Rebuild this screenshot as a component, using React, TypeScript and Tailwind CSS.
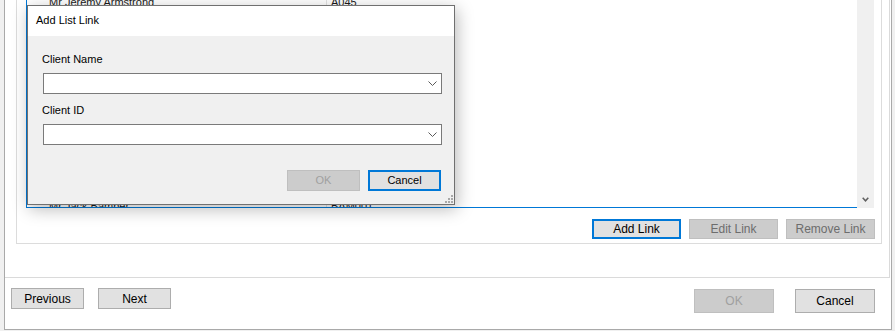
import React from "react";

const rows: [string, string][] = [
  ["Mr Jeremy Armstrong", "A045"],
  ["", ""],
  ["", ""],
  ["", ""],
  ["", ""],
  ["", ""],
  ["", ""],
  ["", ""],
  ["", ""],
  ["", ""],
  ["", ""],
  ["", ""],
  ["Mr Jack Bamber", "BAM001"],
];

function Chevron() {
  return (
    <svg width="9" height="5" viewBox="0 0 9 5" className="block">
      <polyline points="0.5,0.5 4.5,4.5 8.5,0.5" fill="none" stroke="#5a5a5a" strokeWidth="1" />
    </svg>
  );
}

function Combo() {
  return (
    <div className="h-[21px] w-full border border-[#7a7a7a] bg-white flex items-center justify-end pr-[4px]">
      <Chevron />
    </div>
  );
}

export default function App() {
  return (
    <div className="relative w-[895px] h-[331px] overflow-hidden bg-[#f0f0f0] font-['Liberation_Sans',Arial,sans-serif] text-black">
      <div className="ml-[4px] w-[888px] h-[330px] border-l border-r border-b border-[#a9a9a9] bg-white flex flex-col">
        {/* upper panel */}
        <div className="h-[278px] shrink-0 mr-[1px] border-b border-r border-[#dadada] pl-[11px]">
          <div className="w-[866px] h-[244px] border-l border-r border-b border-[#dcdcdc] pl-[9px] pr-[6px] flex flex-col">
            {/* list view */}
            <div className="w-[848px] h-[208px] shrink-0 flex">
              <div className="w-[831px] h-full border-l border-b border-[#0078d7] overflow-hidden">
                <div className="-mt-[6px] flex flex-col">
                  {rows.map(([name, code], i) => (
                    <div key={i} className="h-[17px] flex text-[11px] leading-[17px] text-[#1a1a1a] whitespace-nowrap">
                      <div className="w-[300px] shrink-0 border-r border-[#e3e3e3] pl-[22px]">{name}</div>
                      <div className="pl-[4px]">{code}</div>
                    </div>
                  ))}
                </div>
              </div>
              <div className="w-[17px] h-full bg-[#f0f0f0] flex flex-col justify-end items-center pb-[6px]">
                <svg width="7" height="5" viewBox="0 0 7 5" className="block">
                  <polyline points="0.7,0.7 3.5,3.8 6.3,0.7" fill="none" stroke="#606060" strokeWidth="1.5" />
                </svg>
              </div>
            </div>
            {/* buttons */}
            <div className="mt-[11px] flex justify-end gap-[8px] text-[12px]">
              <div className="w-[89px] h-[20px] border-2 border-[#0078d7] bg-[#e1e1e1] flex items-center justify-center">Add Link</div>
              <div className="w-[89px] h-[20px] border border-[#bfbfbf] bg-[#cccccc] text-[#6d6d6d] flex items-center justify-center">Edit Link</div>
              <div className="w-[89px] h-[20px] border border-[#bfbfbf] bg-[#cccccc] text-[#6d6d6d] flex items-center justify-center">Remove Link</div>
            </div>
          </div>
        </div>
        {/* bottom bar */}
        <div className="flex-1 flex justify-between items-start pt-[10px] pl-[6px] pr-[16px] text-[12px]">
          <div className="flex gap-[14px]">
            <div className="w-[73px] h-[21px] border border-[#adadad] bg-[#e1e1e1] flex items-center justify-center">Previous</div>
            <div className="w-[73px] h-[21px] border border-[#adadad] bg-[#e1e1e1] flex items-center justify-center">Next</div>
          </div>
          <div className="mt-[1px] flex gap-[21px]">
            <div className="w-[80px] h-[24px] border border-[#bfbfbf] bg-[#cccccc] text-[#a0a0a0] flex items-center justify-center">OK</div>
            <div className="w-[80px] h-[24px] border border-[#adadad] bg-[#e1e1e1] flex items-center justify-center">Cancel</div>
          </div>
        </div>
      </div>

      {/* dialog */}
      <div className="absolute left-[27px] top-[5px] w-[428px] h-[200px] border border-[#707070] flex flex-col shadow-[2px_4px_16px_rgba(0,0,0,0.28)]">
        <div className="h-[30px] shrink-0 bg-white flex items-center pl-[8px] pb-[1px] text-[11px] leading-[13px]">Add List Link</div>
        <div className="relative flex-1 bg-[#f0f0f0] pl-[15px] pr-[12px] pt-[17px] flex flex-col text-[11px] leading-[13px]">
          <div className="-ml-px">Client Name</div>
          <div className="mt-[7px]"><Combo /></div>
          <div className="-ml-px mt-[10px]">Client ID</div>
          <div className="mt-[7px]"><Combo /></div>
          <div className="mt-[25px] flex justify-end gap-[8px] mr-[1px]">
            <div className="w-[73px] h-[21px] border border-[#bfbfbf] bg-[#cccccc] text-[#a0a0a0] flex items-center justify-center">OK</div>
            <div className="w-[73px] h-[21px] border-2 border-[#0078d7] bg-[#e1e1e1] flex items-center justify-center">Cancel</div>
          </div>
          <svg width="8" height="8" viewBox="0 0 8 8" className="absolute right-[1px] bottom-[1px]">
            <rect x="6" y="0" width="2" height="2" fill="#a8a8a8" />
            <rect x="3" y="3" width="2" height="2" fill="#a8a8a8" />
            <rect x="6" y="3" width="2" height="2" fill="#a8a8a8" />
            <rect x="0" y="6" width="2" height="2" fill="#a8a8a8" />
            <rect x="3" y="6" width="2" height="2" fill="#a8a8a8" />
            <rect x="6" y="6" width="2" height="2" fill="#a8a8a8" />
          </svg>
        </div>
      </div>
    </div>
  );
}
